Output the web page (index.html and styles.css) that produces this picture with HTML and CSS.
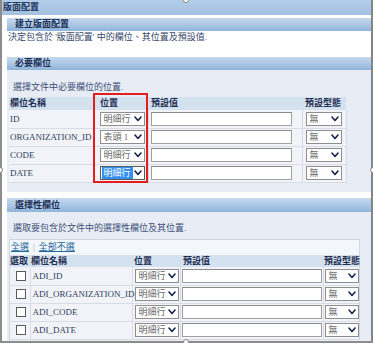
FILE: index.html
```html
<!DOCTYPE html>
<html lang="zh-Hant">
<head>
<meta charset="utf-8">
<title>版面配置</title>
<link rel="stylesheet" href="styles.css">
</head>
<body>
<div class="win">
  <div class="titlebar">版面配置</div>
  <div class="content">
    <div class="bar bar-first">建立版面配置</div>
    <div class="intro">決定包含於 '版面配置' 中的欄位、其位置及預設值.</div>

    <section class="sec sec-req">
      <div class="bar">必要欄位</div>
      <div class="sec-body">
        <p class="desc">選擇文件中必要欄位的位置.</p>
        <div class="tablewrap">
          <table class="grid req-grid">
            <colgroup><col class="c-name"><col class="c-pos"><col class="c-val"><col class="c-type"></colgroup>
            <thead>
              <tr><th class="th-name">欄位名稱</th><th class="th-pos">位置</th><th class="th-val">預設值</th><th class="th-type">預設型態</th></tr>
            </thead>
            <tbody>
              <tr><td class="name">ID</td><td class="pos"><span class="sel sel-pos"><span class="sel-text">明細行</span><svg class="chev" viewBox="0 0 8 6"><polyline points="1,1 4,4.5 7,1"/></svg></span></td><td class="val"><span class="inp"></span></td><td class="type"><span class="sel sel-type"><span class="sel-text">無</span><svg class="chev" viewBox="0 0 8 6"><polyline points="1,1 4,4.5 7,1"/></svg></span></td></tr>
              <tr><td class="name">ORGANIZATION_ID</td><td class="pos"><span class="sel sel-pos"><span class="sel-text">表頭 1</span><svg class="chev" viewBox="0 0 8 6"><polyline points="1,1 4,4.5 7,1"/></svg></span></td><td class="val"><span class="inp"></span></td><td class="type"><span class="sel sel-type"><span class="sel-text">無</span><svg class="chev" viewBox="0 0 8 6"><polyline points="1,1 4,4.5 7,1"/></svg></span></td></tr>
              <tr><td class="name">CODE</td><td class="pos"><span class="sel sel-pos"><span class="sel-text">明細行</span><svg class="chev" viewBox="0 0 8 6"><polyline points="1,1 4,4.5 7,1"/></svg></span></td><td class="val"><span class="inp"></span></td><td class="type"><span class="sel sel-type"><span class="sel-text">無</span><svg class="chev" viewBox="0 0 8 6"><polyline points="1,1 4,4.5 7,1"/></svg></span></td></tr>
              <tr><td class="name">DATE</td><td class="pos"><span class="sel sel-pos sel-focus"><span class="sel-text sel-hl">明細行</span><svg class="chev" viewBox="0 0 8 6"><polyline points="1,1 4,4.5 7,1"/></svg></span></td><td class="val"><span class="inp"></span></td><td class="type"><span class="sel sel-type"><span class="sel-text">無</span><svg class="chev" viewBox="0 0 8 6"><polyline points="1,1 4,4.5 7,1"/></svg></span></td></tr>
            </tbody>
          </table>
          <div class="redbox"></div>
        </div>
      </div>
    </section>

    <section class="sec sec-opt">
      <div class="bar bar-opt">選擇性欄位</div>
      <div class="sec-body">
        <p class="desc desc-opt">選取要包含於文件中的選擇性欄位及其位置.</p>
        <div class="optbox">
          <div class="links"><a class="lnk">全選</a><span class="pipe">|</span><a class="lnk">全部不選</a></div>
          <table class="grid opt-grid">
            <colgroup><col class="o-chk"><col class="o-name"><col class="o-pos"><col class="o-val"><col class="o-type"></colgroup>
            <thead>
              <tr><th class="oh-chk">選取</th><th class="oh-name">欄位名稱</th><th class="oh-pos">位置</th><th class="oh-val">預設值</th><th class="oh-type">預設型態</th></tr>
            </thead>
            <tbody>
              <tr><td class="chk"><span class="box"></span></td><td class="oname">ADI_ID</td><td class="opos"><span class="sel sel-opos"><span class="sel-text">明細行</span><svg class="chev" viewBox="0 0 8 6"><polyline points="1,1 4,4.5 7,1"/></svg></span></td><td class="oval"><span class="inp inp-opt"></span></td><td class="otype"><span class="sel sel-otype"><span class="sel-text">無</span><svg class="chev" viewBox="0 0 8 6"><polyline points="1,1 4,4.5 7,1"/></svg></span></td></tr>
              <tr><td class="chk"><span class="box"></span></td><td class="oname">ADI_ORGANIZATION_ID</td><td class="opos"><span class="sel sel-opos"><span class="sel-text">明細行</span><svg class="chev" viewBox="0 0 8 6"><polyline points="1,1 4,4.5 7,1"/></svg></span></td><td class="oval"><span class="inp inp-opt"></span></td><td class="otype"><span class="sel sel-otype"><span class="sel-text">無</span><svg class="chev" viewBox="0 0 8 6"><polyline points="1,1 4,4.5 7,1"/></svg></span></td></tr>
              <tr><td class="chk"><span class="box"></span></td><td class="oname">ADI_CODE</td><td class="opos"><span class="sel sel-opos"><span class="sel-text">明細行</span><svg class="chev" viewBox="0 0 8 6"><polyline points="1,1 4,4.5 7,1"/></svg></span></td><td class="oval"><span class="inp inp-opt"></span></td><td class="otype"><span class="sel sel-otype"><span class="sel-text">無</span><svg class="chev" viewBox="0 0 8 6"><polyline points="1,1 4,4.5 7,1"/></svg></span></td></tr>
              <tr><td class="chk"><span class="box"></span></td><td class="oname">ADI_DATE</td><td class="opos"><span class="sel sel-opos"><span class="sel-text">明細行</span><svg class="chev" viewBox="0 0 8 6"><polyline points="1,1 4,4.5 7,1"/></svg></span></td><td class="oval"><span class="inp inp-opt"></span></td><td class="otype"><span class="sel sel-otype"><span class="sel-text">無</span><svg class="chev" viewBox="0 0 8 6"><polyline points="1,1 4,4.5 7,1"/></svg></span></td></tr>
            </tbody>
          </table>
        </div>
      </div>
    </section>
  </div>
  <span class="handle h-top"></span>
  <span class="handle h-left"></span>
  <span class="handle h-right"></span>
  <span class="handle h-bottom"></span>
</div>
</body>
</html>
```

FILE: styles.css
```css
* { box-sizing: border-box; }
html, body { margin: 0; padding: 0; background: #ffffff; }
body {
  font-family: "Liberation Serif", "Noto Sans CJK TC", serif;
  font-size: 9px;
  color: #2b3a58;
}
.win {
  position: relative;
  width: 373px;
  height: 343px;
  border-left: 2px solid #8c8c8c;
  border-right: 2px solid #858585;
  border-bottom: 2px solid #8c8c8c;
  background: #ffffff;
  display: flex;
  flex-direction: column;
}
.titlebar {
  height: 15px;
  line-height: 15px;
  padding-left: 1px;
  background: linear-gradient(#b3cde8, #a3c1e0);
  color: #23365e;
  font-weight: bold;
}
.content {
  flex: 1;
  padding: 3px 0 0 5px;
  display: flex;
  flex-direction: column;
}
.bar {
  height: 13px;
  line-height: 13px;
  padding-left: 8px;
  background: linear-gradient(#c6d9ee, #a9c6e4 55%, #8fb4da);
  color: #1d2f55;
  font-weight: bold;
}
.bar-opt { height: 14px; line-height: 14px; }
.intro {
  height: 26px;
  line-height: 12px;
  padding-left: 1px;
  color: #34466a;
}
.sec-req .sec-body {
  background: #e8ecf4;
  height: 122px;
  padding: 11px 0 0 2px;
}
.sec-req { margin-bottom: 6px; }
.sec-opt { flex: 1; display: flex; flex-direction: column; }
.sec-opt .sec-body {
  flex: 1;
  background: #e8ecf4;
  padding: 10px 0 0 2px;
}
.desc {
  margin: 0 0 4px 0;
  padding-left: 4px;
  height: 12px;
  line-height: 12px;
  color: #3b4f78;
}
.desc-opt { margin-bottom: 5px; }
.tablewrap { position: relative; width: 337px; }
.grid {
  border-collapse: collapse;
  table-layout: fixed;
}
.req-grid { width: 337px; }
.c-name { width: 84px; }
.c-pos { width: 55px; }
.c-val { width: 154px; }
.c-type { width: 44px; }
.grid th {
  background: #d4e1ef;
  color: #1f2f52;
  font-weight: bold;
  text-align: left;
  height: 13px;
  line-height: 13px;
  padding: 0;
  white-space: nowrap;
}
.th-name { padding-left: 1px !important; }
.th-pos { padding-left: 7px !important; }
.th-val { padding-left: 3px !important; }
.th-type { padding-left: 3px !important; }
.grid td {
  height: 18px;
  padding: 0;
  background: #f1f3f8;
  border-bottom: 1px solid #d7dce5;
  border-right: 1px solid #d7dce5;
  vertical-align: middle;
  white-space: nowrap;
  color: #2f3d5c;
}
.req-grid td.name { padding-left: 1px; }
.req-grid td.pos { padding-left: 6px; }
.req-grid td.val { padding-left: 2px; }
.req-grid td.type { padding-left: 3px; }
.sel {
  display: flex;
  align-items: center;
  justify-content: space-between;
  height: 14px;
  background: #ffffff;
  border: 1px solid #8e8e8e;
  padding: 0 2px 0 2px;
}
.sel-pos { width: 45px; }
.sel-type { width: 36px; }
.sel-opos { width: 44px; }
.sel-otype { width: 34px; }
.sel-text {
  color: #6a6a6a;
  line-height: 12px;
  padding: 0 1px;
}
.sel-focus { border-color: #5a5a5a; }
.sel-hl {
  background: #3390f0;
  color: #ffffff;
  margin-left: -1px;
  padding: 0 2px;
}
.chev { width: 8px; height: 6px; flex: none; }
.chev polyline {
  fill: none;
  stroke: #17264f;
  stroke-width: 1.6;
  stroke-linecap: round;
  stroke-linejoin: round;
}
.inp {
  display: block;
  width: 141px;
  height: 14px;
  background: #ffffff;
  border: 1px solid #a0a0a0;
  border-top-color: #8a8a8a;
}
.inp-opt { width: 140px; }
.redbox {
  position: absolute;
  left: 84px;
  top: -4px;
  width: 55px;
  height: 90px;
  border: 2px solid #e41e1e;
}
.optbox {
  width: 351px;
  background: #f3f6fb;
  border: 1px solid #cfd7e3;
  border-bottom: none;
}
.links {
  height: 15px;
  line-height: 15px;
  padding-left: 1px;
}
.lnk {
  color: #22679a;
  text-decoration: underline;
}
.pipe { color: #9aa3b3; padding: 0 4px; }
.opt-grid { width: 349px; }
.o-chk { width: 20px; }
.o-name { width: 102px; }
.o-pos { width: 48px; }
.o-val { width: 143px; }
.o-type { width: 36px; }
.opt-grid th { height: 12px; line-height: 12px; }
.oh-chk { padding-left: 0 !important; }
.oh-name { padding-left: 1px !important; }
.oh-pos { padding-left: 2px !important; }
.oh-val { padding-left: 3px !important; }
.oh-type { padding-left: 1px !important; }
.opt-grid td.chk { padding-left: 6px; }
.box {
  display: block;
  width: 10px;
  height: 10px;
  background: #ffffff;
  border: 1px solid #5a5a5a;
}
.opt-grid td.oname { padding-left: 2px; }
.opt-grid td.opos { padding-left: 2px; }
.opt-grid td.oval { padding-left: 1px; }
.opt-grid td.otype { padding-left: 1px; border-right: none; }
.handle {
  position: absolute;
  width: 6px;
  height: 6px;
  border-radius: 50%;
  background: #ffffff;
  border: 1px solid #8c8c8c;
}
.h-top { left: 181px; top: -3px; }
.h-bottom { left: 181px; bottom: -4px; }
.h-left { left: -5px; top: 167px; }
.h-right { right: -5px; top: 167px; }
```
